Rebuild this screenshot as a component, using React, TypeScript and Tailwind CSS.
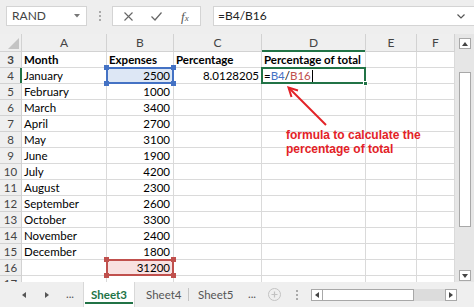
import React from "react";

const COLS = [
  { k: "A", w: "w-[85px]" },
  { k: "B", w: "w-[67px]" },
  { k: "C", w: "w-[88px]" },
  { k: "D", w: "w-[104px]" },
  { k: "E", w: "w-[51px]" },
  { k: "F", w: "w-[38px]" },
];

const ROWS: [number, string, string][] = [
  [5, "February", "1000"],
  [6, "March", "3400"],
  [7, "April", "2700"],
  [8, "May", "3100"],
  [9, "June", "1900"],
  [10, "July", "4200"],
  [11, "August", "2300"],
  [12, "September", "2600"],
  [13, "October", "3300"],
  [14, "November", "2400"],
  [15, "December", "1800"],
];

const cell = "h-[16px] border-r border-b border-[#dadada] flex items-center shrink-0";
const rh =
  "w-[22px] h-[16px] shrink-0 bg-[#efefef] border-r border-b border-[#d2d2d2] flex items-center justify-center text-[#444]";

function Corners({ color }: { color: string }) {
  return (
    <>
      <div className={`absolute -left-[3px] -top-[3px] w-[5px] h-[5px] ${color}`} />
      <div className={`absolute -right-[3px] -top-[3px] w-[5px] h-[5px] ${color}`} />
      <div className={`absolute -left-[3px] -bottom-[3px] w-[5px] h-[5px] ${color}`} />
      <div className={`absolute -right-[3px] -bottom-[3px] w-[5px] h-[5px] ${color}`} />
    </>
  );
}

function RowH({ n, active }: { n: number; active?: boolean }) {
  return (
    <div className={rh + (active ? " relative" : "")}>
      {n}
      {active && <div className="absolute right-[-1px] top-0 bottom-0 w-[2px] bg-[#217346]" />}
    </div>
  );
}

function Rest() {
  return (
    <>
      <div className={cell + " w-[88px]"} />
      <div className={cell + " w-[104px]"} />
      <div className={cell + " w-[51px]"} />
      <div className={cell + " w-[38px]"} />
    </>
  );
}

export default function App() {
  return (
    <div
      className="relative w-[474px] h-[307px] overflow-hidden bg-white text-[11.5px] text-black flex flex-col"
      style={{ fontFamily: "Lato, 'Open Sans', sans-serif" }}
    >
      {/* Formula bar */}
      <div className="h-[34px] shrink-0 bg-[#eeeeee] flex items-start pt-[6px]">
        <div className="ml-[6px] w-[81px] h-[20px] bg-white border border-[#d4d4d4] flex items-center pl-[5px] text-[12px] text-[#444]">
          <span>RAND</span>
          <svg className="ml-auto mr-[6px]" width="6" height="4" viewBox="0 0 6 4">
            <path d="M0 0 L6 0 L3 3.5 Z" fill="#777" />
          </svg>
        </div>
        <div className="ml-[11px] w-[4px] h-[20px] flex flex-col items-center justify-center gap-[2px]">
          <div className="w-[2px] h-[2px] bg-[#aaa]" />
          <div className="w-[2px] h-[2px] bg-[#aaa]" />
          <div className="w-[2px] h-[2px] bg-[#aaa]" />
        </div>
        <div className="ml-[10px] w-[89px] h-[20px] bg-white border border-[#d4d4d4] flex items-center">
          <svg className="ml-[11px]" width="9" height="9" viewBox="0 0 9 9">
            <path d="M0.5 0.5 L8.5 8.5 M8.5 0.5 L0.5 8.5" stroke="#666" strokeWidth="1.1" />
          </svg>
          <svg className="ml-[18px]" width="11" height="9" viewBox="0 0 11 9">
            <path d="M0.5 4.5 L4 8 L10.5 0.5" stroke="#666" strokeWidth="1.2" fill="none" />
          </svg>
          <span
            className="ml-[19px] italic text-[#555] text-[13px] leading-none"
            style={{ fontFamily: "'Liberation Serif', serif" }}
          >
            f<span className="text-[9px]">x</span>
          </span>
        </div>
        <div className="ml-[12px] flex-1 h-[20px] bg-white border border-[#d4d4d4] border-r-0 flex items-center pl-[4px] text-[12px] text-[#222]">
          <span>=B4/B16</span>
          <svg className="ml-auto mr-[9px]" width="8" height="5" viewBox="0 0 8 5">
            <path d="M0.5 0.5 L4 4 L7.5 0.5" stroke="#555" strokeWidth="1.2" fill="none" />
          </svg>
        </div>
      </div>

      {/* Grid + vertical scrollbar */}
      <div className="flex h-[248px] shrink-0">
        <div className="w-[455px] h-[248px] overflow-hidden flex flex-col">
          {/* Column headers */}
          <div className="flex h-[18px] shrink-0">
            <div className="w-[22px] h-[18px] bg-[#efefef] border-r border-b border-[#d2d2d2] relative">
              <svg className="absolute right-[2px] bottom-[2px]" width="11" height="11" viewBox="0 0 11 11">
                <path d="M11 0 L11 11 L0 11 Z" fill="#c4c4c4" />
              </svg>
            </div>
            {COLS.map((c) => (
              <div
                key={c.k}
                className={`${c.w} h-[18px] shrink-0 bg-[#efefef] border-r border-b border-[#d2d2d2] flex items-center justify-center text-[12px] text-[#444] relative`}
              >
                {c.k}
                {c.k === "D" && <div className="absolute left-0 right-0 bottom-[-1px] h-[2px] bg-[#217346]" />}
              </div>
            ))}
          </div>

          {/* Row 3 */}
          <div className="flex shrink-0 font-bold">
            <RowH n={3} />
            <div className={cell + " w-[85px] pl-[2px]"}>Month</div>
            <div className={cell + " w-[67px] pl-[2px]"}>Expenses</div>
            <div className={cell + " w-[88px] pl-[2px]"}>Percentage</div>
            <div className={cell + " w-[104px] pl-[2px]"}>Percentage of total</div>
            <div className={cell + " w-[51px]"} />
            <div className={cell + " w-[38px]"} />
          </div>

          {/* Row 4 */}
          <div className="flex shrink-0">
            <RowH n={4} active />
            <div className={cell + " w-[85px] pl-[2px]"}>January</div>
            <div className={cell + " w-[67px] justify-end pr-[3px] bg-[#dde7f5] relative"}>
              2500
              <div className="absolute -left-[1px] -top-[1px] right-[-1px] bottom-[-1px] border-2 border-[#4472c4]" />
              <Corners color="bg-[#4472c4]" />
            </div>
            <div className={cell + " w-[88px] justify-end pr-[2px]"}>8.0128205</div>
            <div className={cell + " w-[104px] pl-[2px] relative"}>
              <span>=</span>
              <span className="text-[#4472c4]">B4</span>
              <span>/</span>
              <span className="text-[#c0504d]">B16</span>
              <span className="ml-[1px] w-px h-[12px] bg-black" />
              <div className="absolute -left-[1px] -top-[1px] right-[-1px] bottom-[-1px] border-2 border-[#217346]" />
              <div className="absolute right-[-3px] bottom-[-3px] w-[5px] h-[5px] bg-[#217346] border border-white" />
            </div>
            <div className={cell + " w-[51px]"} />
            <div className={cell + " w-[38px]"} />
          </div>

          {ROWS.map(([n, m, v]) => (
            <div key={n} className="flex shrink-0">
              <RowH n={n} />
              <div className={cell + " w-[85px] pl-[2px]"}>{m}</div>
              <div className={cell + " w-[67px] justify-end pr-[3px]"}>{v}</div>
              <Rest />
            </div>
          ))}

          {/* Row 16 */}
          <div className="flex shrink-0">
            <RowH n={16} />
            <div className={cell + " w-[85px]"} />
            <div className={cell + " w-[67px] justify-end pr-[3px] bg-[#f8e1e1] relative"}>
              31200
              <div className="absolute -left-[1px] -top-[1px] right-[-1px] bottom-[-1px] border-2 border-[#c0504d]" />
              <Corners color="bg-[#c0504d]" />
            </div>
            <Rest />
          </div>

          {/* Row 17 (partial) */}
          <div className="flex shrink-0">
            <RowH n={17} />
            <div className={cell + " w-[85px]"} />
            <div className={cell + " w-[67px]"} />
            <Rest />
          </div>
        </div>

        {/* Vertical scrollbar */}
        <div className="w-[19px] h-[248px] bg-[#e6e6e6] flex flex-col items-start pl-[4px]">
          <div className="mt-[4px] w-[12px] h-[11px] bg-white border border-[#a8a8a8] flex items-center justify-center">
            <svg width="6" height="4" viewBox="0 0 6 4">
              <path d="M0 4 L6 4 L3 0 Z" fill="#444" />
            </svg>
          </div>
          <div className="mt-[23px] w-[12px] h-[155px] bg-white border border-[#a8a8a8]" />
          <div className="mt-auto mb-[1px] w-[12px] h-[11px] bg-white border border-[#a8a8a8] flex items-center justify-center">
            <svg width="6" height="4" viewBox="0 0 6 4">
              <path d="M0 0 L6 0 L3 4 Z" fill="#444" />
            </svg>
          </div>
        </div>
      </div>

      {/* Sheet tabs bar */}
      <div className="h-[25px] shrink-0 bg-[#efefef] flex items-center text-[11.5px] text-[#555]">
        <div className="ml-[18px] w-[12px] flex justify-center">
          <svg width="4" height="6" viewBox="0 0 4 6">
            <path d="M4 0 L4 6 L0 3 Z" fill="#555" />
          </svg>
        </div>
        <div className="ml-[11px] w-[12px] flex justify-center">
          <svg width="4" height="6" viewBox="0 0 4 6">
            <path d="M0 0 L0 6 L4 3 Z" fill="#555" />
          </svg>
        </div>
        <div className="ml-[9px] w-[16px] text-center leading-none pb-[2px]">...</div>
        <div className="ml-[5px] w-[52px] h-[25px] bg-white flex items-center justify-center relative font-bold text-[#217346] border-x border-[#d8d8d8]">
          Sheet3
          <div className="absolute left-[1px] right-[1px] bottom-[3px] h-[2px] bg-[#217346]" />
        </div>
        <div className="ml-[11px] w-[32px] whitespace-nowrap">Sheet4</div>
        <div className="ml-[10px] w-px h-[13px] bg-[#c4c4c4]" />
        <div className="ml-[9px] w-[33px] whitespace-nowrap">Sheet5</div>
        <div className="ml-[13px] w-[16px] text-center leading-none pb-[2px]">...</div>
        <div className="ml-[7px] w-[14px] flex justify-center">
          <svg width="13" height="13" viewBox="0 0 13 13">
            <circle cx="6.5" cy="6.5" r="6" fill="none" stroke="#c2c2c2" strokeWidth="1" />
            <path d="M6.5 3.5 V9.5 M3.5 6.5 H9.5" stroke="#c2c2c2" strokeWidth="1.2" />
          </svg>
        </div>
        <div className="ml-[12px] w-[8px] flex flex-col items-center gap-[2px]">
          <div className="w-[2px] h-[2px] bg-[#aaa]" />
          <div className="w-[2px] h-[2px] bg-[#aaa]" />
          <div className="w-[2px] h-[2px] bg-[#aaa]" />
        </div>
        <div className="ml-[10px] w-[146px] h-[12px] bg-[#dcdcdc] flex">
          <div className="w-[12px] h-[12px] bg-white border border-[#a8a8a8] flex items-center justify-center">
            <svg width="4" height="6" viewBox="0 0 4 6">
              <path d="M4 0 L4 6 L0 3 Z" fill="#444" />
            </svg>
          </div>
          <div className="w-[91px] h-[12px] bg-white border border-[#a8a8a8] border-l-0" />
          <div className="ml-auto w-[12px] h-[12px] bg-white border border-[#a8a8a8] flex items-center justify-center">
            <svg width="4" height="6" viewBox="0 0 4 6">
              <path d="M0 0 L0 6 L4 3 Z" fill="#444" />
            </svg>
          </div>
        </div>
      </div>

      {/* Annotation overlay */}
      <svg className="absolute left-0 top-0 pointer-events-none" width="474" height="307" viewBox="0 0 474 307">
        <path d="M326 125 L289 88" stroke="#e32227" strokeWidth="2" fill="none" />
        <path d="M291.5 97 L288.5 87.5 L298 90.5" stroke="#e32227" strokeWidth="2" fill="none" strokeLinejoin="miter" />
      </svg>
      <div
        className="absolute left-[286px] top-[128px] text-[12px] leading-[14px] font-bold text-[#e32227] whitespace-nowrap pointer-events-none"
        style={{ fontFamily: "'Liberation Sans', Arial, sans-serif" }}
      >
        formula to calculate the
        <br />
        percentage of total
      </div>
    </div>
  );
}
